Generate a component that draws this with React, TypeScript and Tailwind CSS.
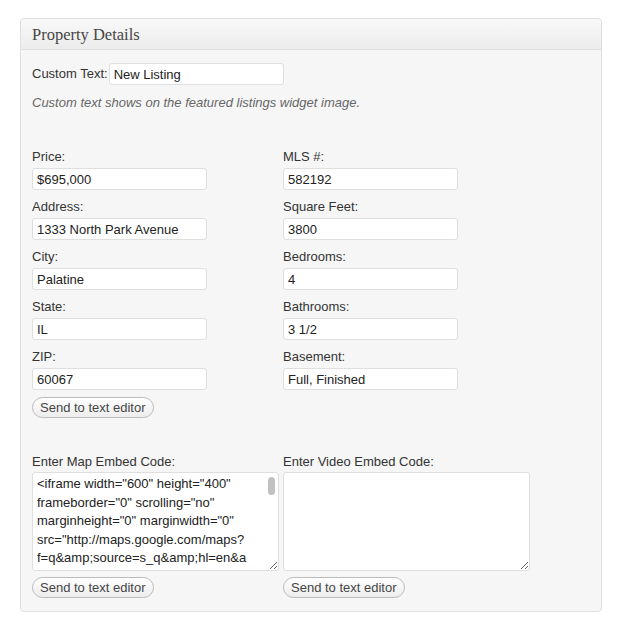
import type { ReactNode } from "react";

const LEFT_FIELDS = [
  { label: "Price:", value: "$695,000" },
  { label: "Address:", value: "1333 North Park Avenue" },
  { label: "City:", value: "Palatine" },
  { label: "State:", value: "IL" },
  { label: "ZIP:", value: "60067" },
];

const RIGHT_FIELDS = [
  { label: "MLS #:", value: "582192" },
  { label: "Square Feet:", value: "3800" },
  { label: "Bedrooms:", value: "4" },
  { label: "Bathrooms:", value: "3 1/2" },
  { label: "Basement:", value: "Full, Finished" },
];

const MAP_CODE =
  '<iframe width="600" height="400" frameborder="0" scrolling="no" marginheight="0" marginwidth="0" src="http://maps.google.com/maps?f=q&amp;source=s_q&amp;hl=en&amp;geocode=&amp;q=1333+North+Park+Avenue,+Palatine,+IL&amp;aq=&amp;ie=UTF8&amp;t=m&amp;z=14&amp;output=embed"></iframe>';

const inputCls =
  "block h-[22px] w-[175px] rounded-[3px] border border-[#dfdfdf] bg-white px-[4px] text-[13px] text-[#222] outline-none";

function Field({ label, value }: { label: string; value: string }) {
  return (
    <div className="mb-[9px]">
      <label className="block h-[16px] leading-[16px] text-[#333]">{label}</label>
      <input className={`${inputCls} mt-[3px]`} defaultValue={value} />
    </div>
  );
}

function SendButton() {
  return (
    <button className="block h-[21px] rounded-full border border-[#bbb] bg-gradient-to-b from-white to-[#ededed] px-[7px] text-[13px] leading-[19px] text-[#464646]">
      Send to text editor
    </button>
  );
}

function EmbedBox({ label, value, children }: { label: string; value: string; children?: ReactNode }) {
  return (
    <div>
      <label className="block h-[16px] leading-[16px] text-[#333]">{label}</label>
      <div className="relative mt-[2px] w-[247px]">
        <textarea
          readOnly
          defaultValue={value}
          className="block h-[99px] w-[247px] resize overflow-hidden rounded-[3px] border border-[#dfdfdf] bg-white py-[2px] pl-[4px] pr-[22px] text-[13px] leading-[18.5px] text-[#222] outline-none"
        />
        {children}
      </div>
      <div className="mt-[6px]">
        <SendButton />
      </div>
    </div>
  );
}

export default function App() {
  return (
    <div
      className="min-h-[630px] bg-white pt-[18px] pl-[20px]"
      style={{ fontFamily: '"Liberation Sans", Arial, sans-serif' }}
    >
      <div className="w-[582px] rounded-[4px] border border-[#dfdfdf] bg-[#f6f6f6]">
        {/* Header */}
        <div className="h-[31px] rounded-t-[4px] border-b border-[#dfdfdf] bg-gradient-to-b from-[#f9f9f9] to-[#ececec] pl-[11px]">
          <h3
            className="text-[16.5px] leading-[31px] text-[#464646]"
            style={{ fontFamily: '"Liberation Serif", Georgia, serif' }}
          >
            Property Details
          </h3>
        </div>

        <div className="px-[11px] pt-[13px] pb-[13px] text-[13px]">
          <div className="flex items-center gap-[1px]">
            <label className="text-[#333]">Custom Text:</label>
            <input className={inputCls} defaultValue="New Listing" />
          </div>
          <p className="mt-[9px] leading-[18px] italic text-[#666]">
            Custom text shows on the featured listings widget image.
          </p>

          <div className="mt-[37px] grid grid-cols-[251px_251px]">
            <div>
              {LEFT_FIELDS.map((f) => (
                <Field key={f.label} {...f} />
              ))}
              <div className="-mt-[2px]">
                <SendButton />
              </div>
            </div>
            <div>
              {RIGHT_FIELDS.map((f) => (
                <Field key={f.label} {...f} />
              ))}
            </div>
          </div>

          <div className="mt-[36px] grid grid-cols-[251px_251px]">
            <EmbedBox label="Enter Map Embed Code:" value={MAP_CODE}>
              <div className="pointer-events-none absolute top-[5px] right-[4px] h-[18px] w-[7px] rounded-full bg-[#c1c1c1]" />
            </EmbedBox>
            <EmbedBox label="Enter Video Embed Code:" value="" />
          </div>
        </div>
      </div>
    </div>
  );
}
